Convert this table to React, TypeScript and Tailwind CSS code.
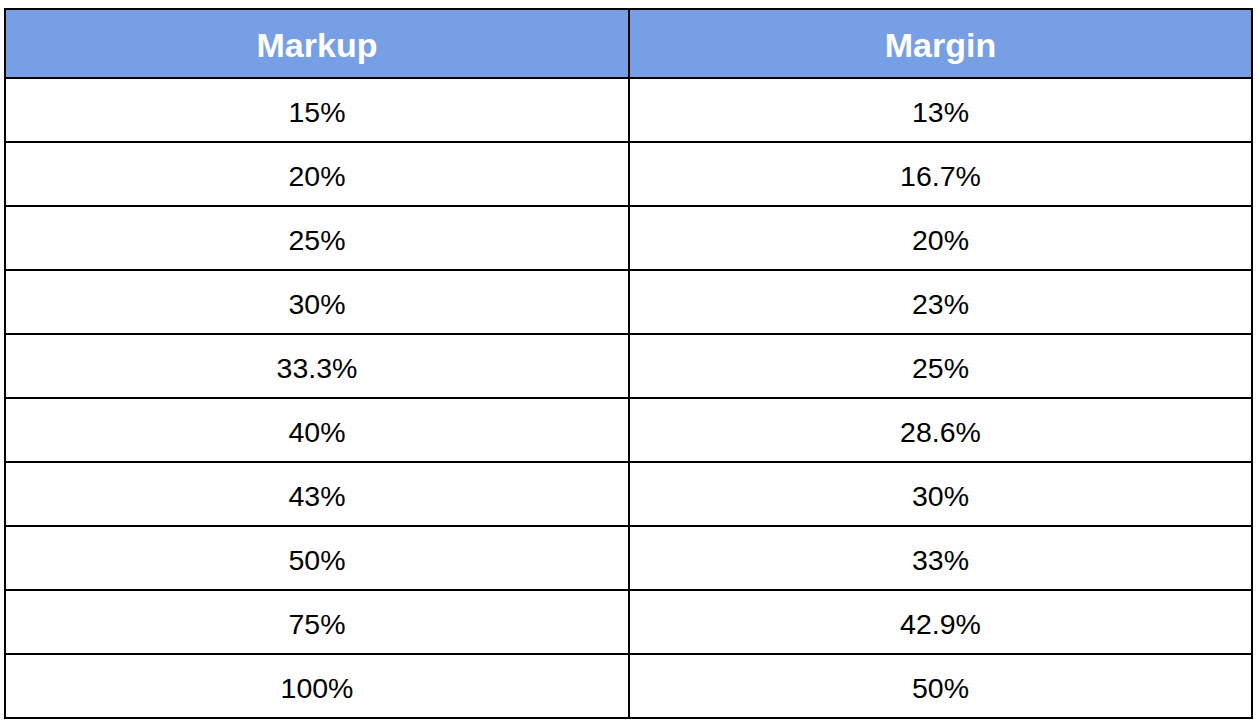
const rows: [string, string][] = [
  ['15%', '13%'],
  ['20%', '16.7%'],
  ['25%', '20%'],
  ['30%', '23%'],
  ['33.3%', '25%'],
  ['40%', '28.6%'],
  ['43%', '30%'],
  ['50%', '33%'],
  ['75%', '42.9%'],
  ['100%', '50%'],
];

export default function App() {
  return (
    <div className="w-[1258px] h-[728px] bg-white pt-[8px] pl-[4px]" style={{ fontFamily: '"Liberation Sans", Arial, sans-serif' }}>
      <div className="w-[1249px] border-2 border-black">
        <div className="flex h-[69px] border-b-2 border-black bg-[#779fe5] text-white font-bold text-[34px]">
          <div className="w-[624px] border-r-2 border-black flex items-center justify-center pt-[4px]">Markup</div>
          <div className="flex-1 flex items-center justify-center pt-[4px]">Margin</div>
        </div>
        {rows.map(([markup, margin], i) => (
          <div key={markup} className={i < rows.length - 1 ? 'flex h-[64px] border-b-2 border-black text-[28.5px] text-black' : 'flex h-[62px] text-[28.5px] text-black'}>
            <div className="w-[624px] border-r-2 border-black flex items-center justify-center pt-[4px]">{markup}</div>
            <div className="flex-1 flex items-center justify-center pt-[4px]">{margin}</div>
          </div>
        ))}
      </div>
    </div>
  );
}
